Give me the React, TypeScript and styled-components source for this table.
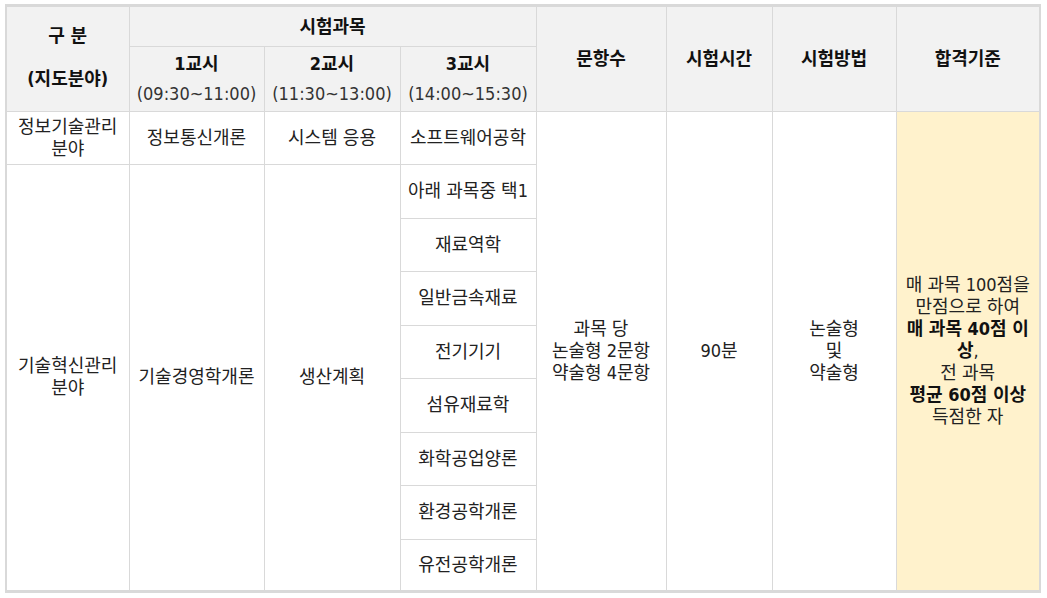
import React from "react";
import styled, { createGlobalStyle } from "styled-components";

const Global = createGlobalStyle`
  html, body { margin: 0; padding: 0; background: #ffffff; }
  body {
    font-family: "DejaVu Sans Condensed", "DejaVu Sans", "Noto Sans CJK KR", sans-serif;
    color: #222222;
  }
`;

const Page = styled.div`
  padding: 4px 0 0 5px;
`;

const Frame = styled.div`
  width: fit-content;
  border: 2px solid #d9d9d9;
  border-top-width: 3px;
  border-bottom-width: 3px;
`;

const Table = styled.table`
  border-collapse: collapse;
  border-style: hidden;
  table-layout: fixed;
  width: 1032px;
  font-size: 18px;
  letter-spacing: 0;
`;

const Row = styled.tr<{ $h: number }>`
  height: ${(p) => p.$h}px;
`;

const Head = styled.th`
  background: #f2f2f2;
  border: 1px solid #d9d9d9;
  font-weight: bold;
  color: #111111;
  text-align: center;
  vertical-align: middle;
  padding: 0 2px;
  line-height: 21.5px;
`;

const GroupHead = styled(Head)`
  padding-bottom: 4px;
`;

const PeriodLabel = styled.div`
  line-height: 30px;
  font-weight: bold;
`;

const PeriodTime = styled.div`
  line-height: 30px;
  font-weight: normal;
  color: #333333;
`;

const Cell = styled.td<{ $tone?: "plain" | "note" }>`
  background: ${(p) => (p.$tone === "note" ? "#fff2cc" : "#ffffff")};
  border: 1px solid #d9d9d9;
  text-align: center;
  vertical-align: middle;
  padding: 0 2px;
  line-height: 22px;
  color: #222222;
  white-space: nowrap;
`;

const Strong = styled.b`
  font-weight: bold;
  color: #111111;
`;

const electives = [
  "재료역학",
  "일반금속재료",
  "전기기기",
  "섬유재료학",
  "화학공업양론",
  "환경공학개론",
  "유전공학개론",
];

const subHeights = [53, 54, 53, 54, 53, 54, 51];

const periods = [
  { label: "1교시", time: "(09:30~11:00)" },
  { label: "2교시", time: "(11:30~13:00)" },
  { label: "3교시", time: "(14:00~15:30)" },
];

export default function App() {
  return (
    <>
      <Global />
      <Page>
        <Frame>
          <Table>
            <colgroup>
              <col style={{ width: 122 }} />
              <col style={{ width: 135 }} />
              <col style={{ width: 136 }} />
              <col style={{ width: 136 }} />
              <col style={{ width: 130 }} />
              <col style={{ width: 106 }} />
              <col style={{ width: 124 }} />
              <col style={{ width: 143 }} />
            </colgroup>
            <thead>
              <Row $h={39}>
                <GroupHead rowSpan={2}>
                  구 분
                  <br />
                  <br />
                  (지도분야)
                </GroupHead>
                <Head colSpan={3}>시험과목</Head>
                <Head rowSpan={2}>문항수</Head>
                <Head rowSpan={2}>시험시간</Head>
                <Head rowSpan={2}>시험방법</Head>
                <Head rowSpan={2}>합격기준</Head>
              </Row>
              <Row $h={65}>
                {periods.map((p) => (
                  <Head key={p.label}>
                    <PeriodLabel>{p.label}</PeriodLabel>
                    <PeriodTime>{p.time}</PeriodTime>
                  </Head>
                ))}
              </Row>
            </thead>
            <tbody>
              <Row $h={53}>
                <Cell>
                  정보기술관리
                  <br />
                  분야
                </Cell>
                <Cell>정보통신개론</Cell>
                <Cell>시스템 응용</Cell>
                <Cell>소프트웨어공학</Cell>
                <Cell rowSpan={9}>
                  과목 당
                  <br />
                  논술형 2문항
                  <br />
                  약술형 4문항
                </Cell>
                <Cell rowSpan={9}>90분</Cell>
                <Cell rowSpan={9}>
                  논술형
                  <br />및<br />
                  약술형
                </Cell>
                <Cell rowSpan={9} $tone="note">
                  매 과목 100점을
                  <br />
                  만점으로 하여
                  <br />
                  <Strong>
                    매 과목 40점 이
                    <br />
                    상
                  </Strong>
                  ,
                  <br />
                  전 과목
                  <br />
                  <Strong>평균 60점 이상</Strong>
                  <br />
                  득점한 자
                </Cell>
              </Row>
              <Row $h={54}>
                <Cell rowSpan={8}>
                  기술혁신관리
                  <br />
                  분야
                </Cell>
                <Cell rowSpan={8}>기술경영학개론</Cell>
                <Cell rowSpan={8}>생산계획</Cell>
                <Cell>아래 과목중 택1</Cell>
              </Row>
              {electives.map((name, i) => (
                <Row key={name} $h={subHeights[i]}>
                  <Cell>{name}</Cell>
                </Row>
              ))}
            </tbody>
          </Table>
        </Frame>
      </Page>
    </>
  );
}
